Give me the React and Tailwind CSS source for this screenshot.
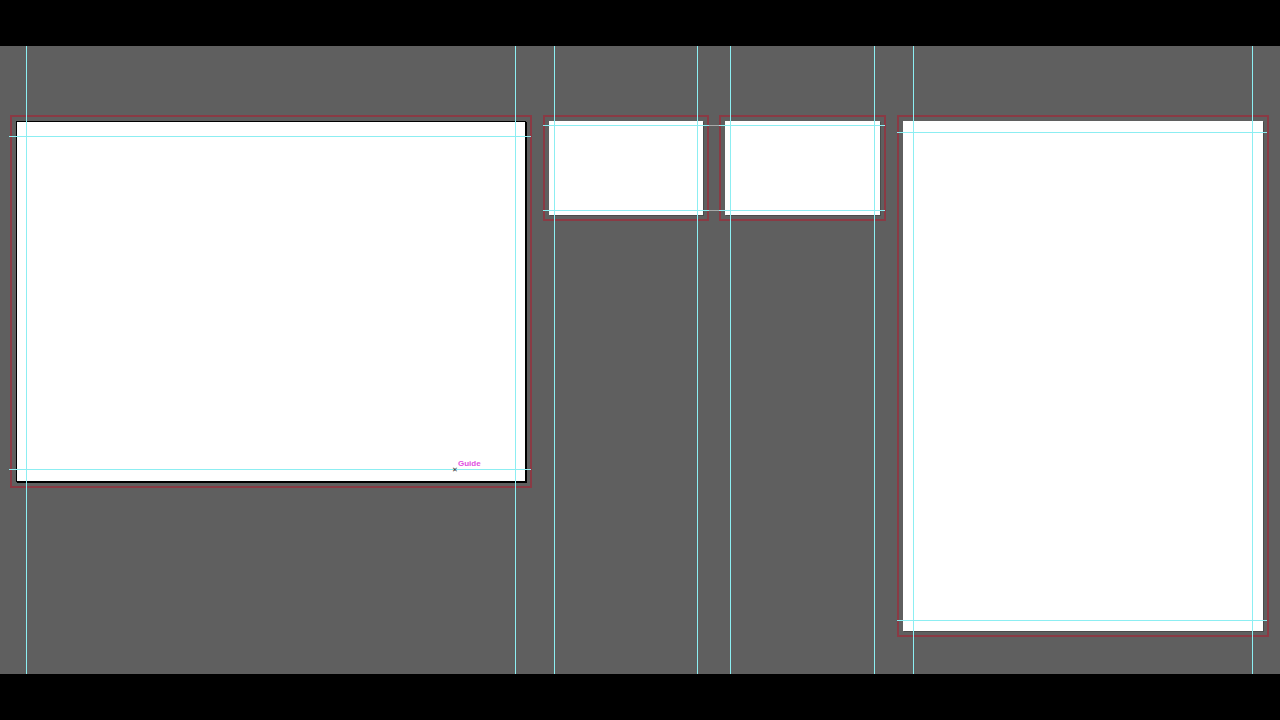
// Layout pasteboard: four pages with bleed boxes and cyan ruler guides.
const PAGES = [
  { x: 16, y: 121, w: 510, h: 361, selected: true },
  { x: 549, y: 121, w: 154, h: 94 },
  { x: 725, y: 121, w: 155, h: 94 },
  { x: 903, y: 121, w: 360, h: 510 },
]

const V_GUIDES = [26, 515, 554, 697, 730, 874, 913, 1252]

const H_GUIDES = [
  { y: 136, x1: 9, x2: 531 },
  { y: 469, x1: 9, x2: 531 },
  { y: 125, x1: 543, x2: 709 },
  { y: 210, x1: 543, x2: 709 },
  { y: 125, x1: 719, x2: 885 },
  { y: 210, x1: 719, x2: 885 },
  { y: 132, x1: 897, x2: 1267 },
  { y: 620, x1: 897, x2: 1267 },
]

const Page = ({ x, y, w, h, selected }) => (
  <>
    <div className="absolute border-2 border-[#8a3a44]"
      style={{ left: x - 6, top: y - 6, width: w + 12, height: h + 12 }} />
    <div className={`absolute bg-white ${selected ? 'border border-black shadow-[1px_1px_0_#000]' : 'shadow-[1px_1px_0_#4a4a4a]'}`}
      style={{ left: x, top: y, width: w, height: h }} />
  </>
)

export default function App() {
  return (
    <div className="w-[1280px] h-[720px] bg-black flex flex-col overflow-hidden">
      <div className="h-[46px] shrink-0" />
      <div className="relative h-[628px] bg-[#5f5f5f] overflow-hidden">
        {PAGES.map((p, i) => (
          <Page key={i} {...p} y={p.y - 46} />
        ))}

        {/* gaps in the top/bottom guides between the two small pages */}
        <div className="absolute h-px bg-[#a8a8a8]" style={{ left: 709, top: 125 - 46, width: 10 }} />
        <div className="absolute h-px bg-[#a8a8a8]" style={{ left: 709, top: 210 - 46, width: 10 }} />

        {H_GUIDES.map((g, i) => (
          <div key={i} className="absolute h-px bg-[#8ceef2]"
            style={{ left: g.x1, top: g.y - 46, width: g.x2 - g.x1 }} />
        ))}

        {V_GUIDES.map(x => (
          <div key={x} className="absolute top-0 bottom-0 w-px bg-[#8ceef2]" style={{ left: x }} />
        ))}

        <span className="absolute left-[458px] top-[414px] text-[8px] font-bold leading-none text-[#e04fe0] font-['Liberation_Sans',sans-serif]">
          Guide
        </span>
        <span className="absolute left-[452px] top-[421px] text-[7px] leading-none text-[#333] font-['DejaVu_Sans',sans-serif]">
          ✕
        </span>
      </div>
      <div className="flex-1" />
    </div>
  )
}
